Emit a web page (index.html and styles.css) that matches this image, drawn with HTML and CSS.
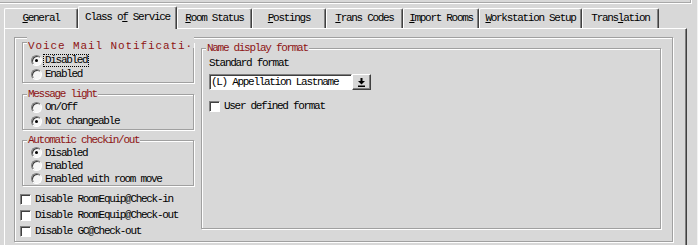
FILE: index.html
```html
<!DOCTYPE html>
<html lang="en">
<head>
  <meta charset="UTF-8" />
  <title>Class of Service</title>
  <link rel="stylesheet" href="styles.css">
</head>
<body>
  <div class="screen">
    <div class="topbar"></div>

    <div class="tabs">
      <div class="tab tab-general"><u>G</u>eneral</div>
      <div class="tab tab-class active">Class o<u>f</u> Service</div>
      <div class="tab tab-room"><u>R</u>oom Status</div>
      <div class="tab tab-postings"><u>P</u>ostings</div>
      <div class="tab tab-trans"><u>T</u>rans Codes</div>
      <div class="tab tab-import"><u>I</u>mport Rooms</div>
      <div class="tab tab-workstation"><u>W</u>orkstation Setup</div>
      <div class="tab tab-translation">Trans<u>l</u>ation</div>
    </div>

    <div class="panel">
      <div class="frame">
        <div class="left-col">
          <fieldset class="group group-voice">
            <legend class="legend-wide">Voice Mail Notificati·</legend>
            <div class="option"><span class="radio checked"></span><span class="focus">Disabled</span></div>
            <div class="option"><span class="radio"></span><span>Enabled</span></div>
          </fieldset>

          <fieldset class="group group-msg">
            <legend>Message light</legend>
            <div class="option"><span class="radio"></span><span>On/Off</span></div>
            <div class="option"><span class="radio checked"></span><span>Not changeable</span></div>
          </fieldset>

          <fieldset class="group group-auto">
            <legend>Automatic checkin/out</legend>
            <div class="option"><span class="radio checked"></span><span>Disabled</span></div>
            <div class="option"><span class="radio"></span><span>Enabled</span></div>
            <div class="option"><span class="radio"></span><span>Enabled with room move</span></div>
          </fieldset>

          <div class="checks">
            <div class="check-row"><span class="check"></span><span>Disable RoomEquip@Check-in</span></div>
            <div class="check-row"><span class="check"></span><span>Disable RoomEquip@Check-out</span></div>
            <div class="check-row"><span class="check"></span><span>Disable GC@Check-out</span></div>
          </div>
        </div>

        <fieldset class="group group-name">
          <legend>Name display format</legend>
          <div class="name-body">
            <div class="field-label">Standard format</div>
            <div class="combo">
              <div class="combo-field">(L) Appellation Lastname</div>
              <div class="combo-btn">
                <svg width="7" height="9" viewBox="0 0 7 9">
                  <rect x="2.5" y="0" width="2" height="3" fill="#000"/>
                  <polygon points="0,3 7,3 3.5,6.5" fill="#000"/>
                  <rect x="0" y="7.5" width="7" height="1.5" fill="#000"/>
                </svg>
              </div>
            </div>
            <div class="check-row user-row"><span class="check"></span><span>User defined format</span></div>
          </div>
        </fieldset>
      </div>
    </div>
  </div>
</body>
</html>
```

FILE: styles.css
```css
* { box-sizing: border-box; }

body {
  margin: 0;
  background: #d8d8d8;
  color: #000;
  font-family: "Liberation Mono", monospace;
  font-size: 11px;
  letter-spacing: -1.3px;
  overflow: hidden;
}

.screen {
  width: 698px;
  height: 245px;
  overflow: hidden;
  border-right: 1px solid #f2f2f2;
}

.topbar {
  width: 692px;
  height: 4px;
  border-bottom: 1px solid #fff;
  border-right: 1px solid #fff;
  box-shadow: inset -1px -1px 0 #a8a8a8;
}

/* tab strip */
.tabs {
  display: flex;
  align-items: flex-end;
  height: 24px;
  padding-left: 4px;
}

.tab {
  height: 20px;
  line-height: 18px;
  text-align: center;
  white-space: nowrap;
  border-top: 1px solid #fff;
  border-left: 1px solid #fff;
  border-right: 1px solid #404040;
  border-radius: 2px 2px 0 0;
  box-shadow: inset -1px 0 0 #808080;
}

.tab u { text-underline-offset: 1px; }

.tab.active {
  height: 23px;
  line-height: 21px;
  margin-bottom: -1px;
  position: relative;
  z-index: 1;
  background: #d8d8d8;
}

.tab-general { width: 74px; }
.tab-class { width: 99px; }
.tab-room { width: 75px; }
.tab-postings { width: 74px; }
.tab-trans { width: 77px; }
.tab-import { width: 76px; }
.tab-workstation { width: 103px; }
.tab-translation { width: 77px; }

.panel {
  width: 683px;
  height: 220px;
  margin-left: 4px;
  padding: 8px 0 0 9px;
  border-top: 1px solid #fff;
  border-left: 1px solid #fff;
  border-right: 1px solid #404040;
  box-shadow: inset -1px 0 0 #808080;
}

.frame {
  width: 659px;
  height: 205px;
  display: flex;
  align-items: flex-start;
  gap: 7px;
  padding-left: 5px;
  border: 1px solid #a0a0a0;
  box-shadow: inset 1px 1px 0 #fff, 1px 1px 0 #fff;
}

/* group boxes */
.group {
  margin: 0;
  padding: 0;
  min-width: 0;
  border: 1px solid #a0a0a0;
  box-shadow: inset 1px 1px 0 #fff, 1px 1px 0 #fff;
}

.group legend {
  margin-left: 4px;
  padding: 0 1px;
  height: 12px;
  line-height: 12px;
  color: #8e1414;
  background: #d8d8d8;
  white-space: nowrap;
}

.group .legend-wide {
  letter-spacing: 0.9px;
  line-height: 20px;
}

.left-col {
  width: 174px;
  display: flex;
  flex-direction: column;
}

.left-col .group {
  width: 172px;
  margin-left: 2px;
}

.group-voice { margin-top: -2px !important; padding: 5px 0 1px; }
.group-msg { margin-top: 5px !important; padding: 0 0 1px; }
.group-auto { margin-top: 4px !important; }
.group-auto .option { height: 13px; }

.option {
  display: flex;
  align-items: center;
  gap: 3px;
  height: 14px;
  padding-left: 8px;
}

.radio {
  width: 11px;
  height: 11px;
  display: grid;
  place-items: center;
  border-radius: 50%;
  background: #f6f6f6;
  border: 1px solid;
  border-color: #808080 #fff #fff #808080;
  box-shadow: inset 1px 1px 0 #404040;
}

.radio.checked::after {
  content: "";
  width: 3px;
  height: 3px;
  border-radius: 50%;
  background: #000;
}

.focus {
  margin-left: -2px;
  padding: 0 2px;
  line-height: 13px;
  outline: 1px dotted #000;
  outline-offset: -1px;
}

.checks { margin-top: 5px; }

.check-row {
  display: flex;
  align-items: center;
  gap: 4px;
  height: 16px;
}

.check {
  width: 11px;
  height: 11px;
  background: #fff;
  border: 1px solid;
  border-color: #808080 #fff #fff #808080;
  box-shadow: inset 1px 1px 0 #404040;
}

/* name display format */
.group-name {
  width: 460px;
  height: 187px;
  margin-top: 4px;
}

.name-body { padding: 2px 0 0 7px; }

.field-label {
  height: 14px;
  line-height: 14px;
}

.combo {
  display: flex;
  width: 162px;
  height: 16px;
  margin-top: 4px;
}

.combo-field {
  width: 143px;
  padding-left: 1px;
  line-height: 14px;
  background: #fff;
  border: 1px solid;
  border-color: #808080 #fff #fff #808080;
  box-shadow: inset 1px 1px 0 #404040;
  white-space: nowrap;
}

.combo-btn {
  width: 19px;
  display: grid;
  place-items: center;
  border: 1px solid;
  border-color: #fff #404040 #404040 #fff;
  box-shadow: inset -1px -1px 0 #808080;
}

.user-row {
  margin-top: 9px;
  height: 14px;
}
```
